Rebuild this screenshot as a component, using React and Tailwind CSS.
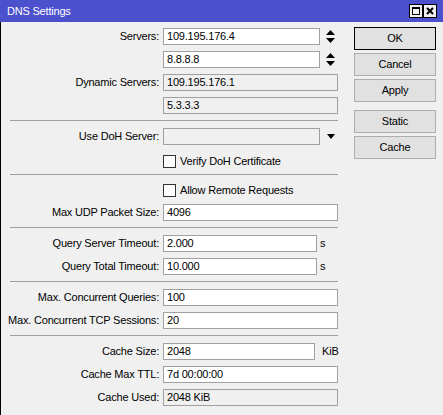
import React from "react";

function Field({ value = "", w = "w-[175px]", ro = false }) {
  return (
    <div
      className={`${w} h-[17px] border ${ro ? "bg-[#f0f0f0]" : "bg-white"} border-[#a0a0a0] pl-[3px] flex items-center leading-none whitespace-nowrap overflow-hidden`}
    >
      {value}
    </div>
  );
}

function Row({ label, children, className = "" }) {
  return (
    <div className={`flex items-center h-[17px] ${className}`}>
      <div className="w-[158px] text-right whitespace-nowrap leading-none">{label}</div>
      <div className="ml-[4px] flex items-center">{children}</div>
    </div>
  );
}

function Sep({ className = "" }) {
  return <div className={`ml-[9px] w-[328px] h-px bg-[#a0a0a0] ${className}`} />;
}

function Spinner() {
  return (
    <svg width="9" height="13" viewBox="0 0 9 13" className="ml-[6px]">
      <polygon points="4.5,0 9,5 0,5" fill="#000" />
      <polygon points="0,8 9,8 4.5,13" fill="#000" />
    </svg>
  );
}

function Check({ label, className = "" }) {
  return (
    <div className={`flex items-center h-[13px] pl-[162px] leading-none ${className}`}>
      <div className="w-[13px] h-[13px] border border-[#333] bg-white" />
      <span className="ml-[4px] whitespace-nowrap">{label}</span>
    </div>
  );
}

function Btn({ children, def = false, className = "" }) {
  return (
    <div
      className={`w-[82px] h-[23px] border ${def ? "border-black" : "border-[#adadad]"} bg-[#e1e1e1] flex items-center justify-center leading-none ${className}`}
    >
      {children}
    </div>
  );
}

export default function App() {
  return (
    <div className="w-[443px] h-[415px] bg-[#f0f0f0] overflow-hidden flex flex-col font-['Liberation_Sans',Arial,sans-serif] text-[11px] tracking-[-0.2px] text-black">
      <div className="h-[22px] shrink-0 bg-[#4b50cd] flex items-center pl-[7px] pr-[6px] text-white">
        <span className="text-[11px] leading-none">DNS Settings</span>
        <div className="ml-auto flex">
          <div className="w-[14px] h-[14px] border border-black bg-[#f0f0f0] flex items-center justify-center">
            <div className="w-[8px] h-[8px] border border-black border-t-2" />
          </div>
          <div className="w-[14px] h-[14px] border border-black bg-[#f0f0f0] flex items-center justify-center">
            <svg width="8" height="8" viewBox="0 0 8 8">
              <path d="M1 1 L7 7 M7 1 L1 7" stroke="#000" strokeWidth="2" />
            </svg>
          </div>
        </div>
      </div>
      <div className="flex-1 flex border-l border-black">
        <div className="w-[353px] flex flex-col pt-[6px]">
          <Row label="Servers:">
            <Field value="109.195.176.4" w="w-[157px]" />
            <Spinner />
          </Row>
          <Row label="" className="mt-[6px]">
            <Field value="8.8.8.8" w="w-[157px]" />
            <Spinner />
          </Row>
          <Row label="Dynamic Servers:" className="mt-[6px]">
            <Field value="109.195.176.1" ro />
          </Row>
          <Row label="" className="mt-[6px]">
            <Field value="5.3.3.3" ro />
          </Row>
          <Sep className="mt-[6px]" />
          <Row label="Use DoH Server:" className="mt-[7px]">
            <Field value="" w="w-[157px]" ro />
            <svg width="8" height="5" viewBox="0 0 8 5" className="ml-[7px]">
              <polygon points="0,0 8,0 4,5" fill="#000" />
            </svg>
          </Row>
          <Check label="Verify DoH Certificate" className="mt-[10px]" />
          <Sep className="mt-[6px]" />
          <Check label="Allow Remote Requests" className="mt-[9px]" />
          <Row label="Max UDP Packet Size:" className="mt-[7px]">
            <Field value="4096" />
          </Row>
          <Sep className="mt-[6px]" />
          <Row label="Query Server Timeout:" className="mt-[7px]">
            <Field value="2.000" w="w-[154px]" />
            <span className="ml-[3px] leading-none">s</span>
          </Row>
          <Row label="Query Total Timeout:" className="mt-[6px]">
            <Field value="10.000" w="w-[154px]" />
            <span className="ml-[3px] leading-none">s</span>
          </Row>
          <Sep className="mt-[6px]" />
          <Row label="Max. Concurrent Queries:" className="mt-[7px]">
            <Field value="100" />
          </Row>
          <Row label="Max. Concurrent TCP Sessions:" className="mt-[6px]">
            <Field value="20" />
          </Row>
          <Sep className="mt-[6px]" />
          <Row label="Cache Size:" className="mt-[7px]">
            <Field value="2048" w="w-[152px]" />
            <span className="ml-[7px] leading-none">KiB</span>
          </Row>
          <Row label="Cache Max TTL:" className="mt-[6px]">
            <Field value="7d 00:00:00" />
          </Row>
          <Row label="Cache Used:" className="mt-[6px]">
            <Field value="2048 KiB" ro />
          </Row>
        </div>
        <div className="flex flex-col pt-[5px]">
          <Btn def>OK</Btn>
          <Btn className="mt-[3px]">Cancel</Btn>
          <Btn className="mt-[3px]">Apply</Btn>
          <Btn className="mt-[8px]">Static</Btn>
          <Btn className="mt-[3px]">Cache</Btn>
        </div>
      </div>
    </div>
  );
}
